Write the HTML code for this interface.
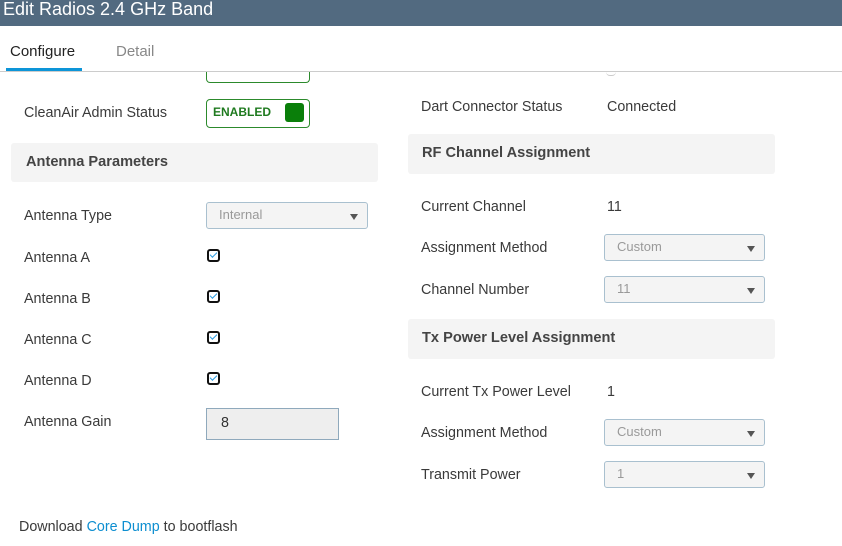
<!DOCTYPE html>
<html><head><style>
body{margin:0;width:842px;height:546px;position:relative;overflow:hidden;background:#fff;font-family:"Liberation Sans",sans-serif;color:#3a3a3a;font-size:14.3px}
.a{position:absolute;white-space:nowrap}
.sec{position:absolute;background:#f4f4f4;border-radius:3px;font-weight:bold;font-size:14.6px;color:#444;box-sizing:border-box;padding-left:15px}
.sel{position:absolute;background:#f4f4f4;border:1px solid #a9c0cf;border-radius:3px;box-sizing:border-box;color:#999;font-size:13px;padding:4px 0 0 12px;height:27px}
.sel:after{content:"";position:absolute;right:9px;top:11px;border-left:4px solid transparent;border-right:4px solid transparent;border-top:6px solid #555}
.cb{position:absolute;width:9px;height:9px;border:2px solid #111;border-radius:3px;background:#fff}
.cb:after{content:"";position:absolute;left:1px;top:1px;width:6px;height:3px;border-left:1.6px solid #2a9ae0;border-bottom:1.6px solid #2a9ae0;transform:rotate(-45deg)}
</style></head><body>
<div class="a" style="left:0;top:0;width:842px;height:26px;background:#526a80"></div>
<div class="a" style="left:3px;top:-1px;color:#fff;font-size:18px">Edit Radios 2.4 GHz Band</div>
<div class="a" style="left:10px;top:43px;color:#222;font-size:15px">Configure</div>
<div class="a" style="left:116px;top:43px;color:#888;font-size:15px">Detail</div>
<div class="a" style="left:0;top:71px;width:842px;height:1px;background:#ccc"></div>
<div class="a" style="left:6px;top:68px;width:76px;height:3px;background:#0d95d8"></div>
<div class="a" style="left:206px;top:72px;width:102px;height:10px;border:1px solid #2c8a2c;border-top:none;border-radius:0 0 4px 4px"></div>
<div class="a" style="left:606px;top:72px;width:10px;height:3px;border-bottom:1px solid #ccc;border-radius:0 0 5px 5px"></div>
<div class="a" style="left:24px;top:105px">CleanAir Admin Status</div>
<div class="a" style="left:206px;top:99px;width:104px;height:29px;border:1px solid #2c8a2c;border-radius:4px;box-sizing:border-box"></div>
<div class="a" style="left:213px;top:105px;font-size:12px;font-weight:bold;color:#1f7a1f">ENABLED</div>
<div class="a" style="left:285px;top:103px;width:19px;height:19px;background:#0a7f0a;border-radius:3px"></div>
<div class="sec" style="left:11px;top:143px;width:367px;height:39px;padding-top:11px">Antenna Parameters</div>
<div class="a" style="left:421px;top:99px">Dart Connector Status</div>
<div class="a" style="left:607px;top:99px">Connected</div>
<div class="sec" style="left:408px;top:134px;width:367px;height:40px;padding-top:11px;padding-left:14px">RF Channel Assignment</div>
<div class="a" style="left:24px;top:208px">Antenna Type</div>
<div class="sel" style="left:206px;top:202px;width:162px">Internal</div>
<div class="a" style="left:24px;top:250px">Antenna A</div><div class="cb" style="left:207px;top:249px"></div>
<div class="a" style="left:24px;top:291px">Antenna B</div><div class="cb" style="left:207px;top:290px"></div>
<div class="a" style="left:24px;top:332px">Antenna C</div><div class="cb" style="left:207px;top:331px"></div>
<div class="a" style="left:24px;top:373px">Antenna D</div><div class="cb" style="left:207px;top:372px"></div>
<div class="a" style="left:24px;top:414px">Antenna Gain</div>
<div class="a" style="left:206px;top:408px;width:133px;height:32px;background:#eee;border:1px solid #8fa9bc;box-sizing:border-box;padding:6px 0 0 14px;color:#333">8</div>
<div class="a" style="left:421px;top:199px">Current Channel</div><div class="a" style="left:607px;top:199px">11</div>
<div class="a" style="left:421px;top:240px">Assignment Method</div><div class="sel" style="left:604px;top:234px;width:161px">Custom</div>
<div class="a" style="left:421px;top:282px">Channel Number</div><div class="sel" style="left:604px;top:276px;width:161px">11</div>
<div class="sec" style="left:408px;top:319px;width:367px;height:40px;padding-top:11px;padding-left:14px">Tx Power Level Assignment</div>
<div class="a" style="left:421px;top:384px">Current Tx Power Level</div><div class="a" style="left:607px;top:384px">1</div>
<div class="a" style="left:421px;top:425px">Assignment Method</div><div class="sel" style="left:604px;top:419px;width:161px">Custom</div>
<div class="a" style="left:421px;top:467px">Transmit Power</div><div class="sel" style="left:604px;top:461px;width:161px">1</div>
<div class="a" style="left:19px;top:519px">Download <span style="color:#0d8ed0">Core Dump</span> to bootflash</div>
</body></html>
